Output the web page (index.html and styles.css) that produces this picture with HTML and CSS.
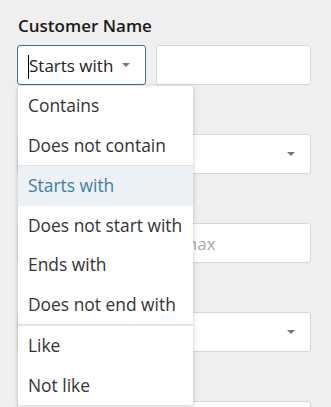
FILE: index.html
```html
<!DOCTYPE html>
<html lang="en">
<head>
    <meta charset="UTF-8">
    <meta name="viewport" content="width=device-width, initial-scale=1.0">
    <title>Filter</title>
    <link rel="stylesheet" href="styles.css">
</head>
<body>

    <div class="filter">
        <div class="field">
            <div class="label">Customer Name</div>
            <div class="row">
                <div class="combo">
                    <div class="select focused">
                        <span class="value"><span class="caret"></span>Starts with</span>
                        <span class="arrow"></span>
                    </div>
                    <ul class="menu">
                        <li>Contains</li>
                        <li class="last">Does not contain</li>
                        <li class="active">Starts with</li>
                        <li>Does not start with</li>
                        <li>Ends with</li>
                        <li class="last">Does not end with</li>
                        <li class="first">Like</li>
                        <li>Not like</li>
                    </ul>
                </div>
                <input class="text" type="text">
            </div>
        </div>

        <!-- labels of these fields sit under the open menu -->
        <div class="field">
            <div class="label"></div>
            <div class="select wide">
                <span class="value"></span>
                <span class="arrow"></span>
            </div>
        </div>

        <div class="field">
            <div class="label"></div>
            <div class="row range">
                <input class="text" type="text">
                <span class="dash"></span>
                <input class="text" type="text" placeholder="max">
            </div>
        </div>

        <div class="field">
            <div class="label"></div>
            <div class="select wide">
                <span class="value"></span>
                <span class="arrow"></span>
            </div>
        </div>

        <div class="field">
            <div class="label"></div>
            <input class="text full" type="text">
        </div>
    </div>

</body>
</html>
```

FILE: styles.css
```css
body {
    margin: 0;
    padding: 0;
    background-color: #efefef;
    font-family: "Open Sans", sans-serif;
    color: #333;
    overflow: hidden;
}
.filter {
    padding: 14px 20px 0 17px;
}
.field {
    margin-bottom: 18px;
}
.label {
    height: 24px;
    font-size: 17px;
    font-weight: 600;
    line-height: 24px;
    color: #1b1b1b;
    margin-bottom: 7px;
    padding-left: 1px;
}
.row {
    display: flex;
    gap: 10px;
}
.combo {
    position: relative;
    width: 129px;
    flex: none;
}
.select {
    height: 40px;
    box-sizing: border-box;
    border: 1px solid #d8d8d8;
    border-radius: 3px;
    background-color: #fff;
    display: flex;
    align-items: center;
    justify-content: space-between;
    padding: 0 15px 0 11px;
}
.select.focused {
    border-color: #3d7196;
}
.value {
    position: relative;
    font-size: 17px;
    color: #222;
}
.caret {
    position: absolute;
    left: -1px;
    top: 1px;
    width: 1px;
    height: 24px;
    background-color: #000;
}
.arrow {
    width: 0;
    height: 0;
    border-left: 4px solid transparent;
    border-right: 4px solid transparent;
    border-top: 4px solid #777;
}
.text {
    flex: 1;
    min-width: 0;
    height: 40px;
    box-sizing: border-box;
    border: 1px solid #d8d8d8;
    border-radius: 3px;
    background-color: #fff;
    padding: 0 10px;
    font-family: "Open Sans", sans-serif;
    font-size: 17px;
    outline: none;
}
.text::placeholder {
    color: #aaa;
}
.full {
    width: 100%;
}
.range {
    gap: 0;
    align-items: center;
}
.dash {
    width: 10px;
}
.range .text:last-child {
    padding-left: 13px;
}
.menu {
    position: absolute;
    top: 41px;
    left: 1px;
    width: 175px;
    margin: 0;
    padding: 0;
    list-style: none;
    background-color: #fff;
    border-radius: 2px;
    box-shadow: 0 1px 5px rgba(0, 0, 0, 0.22);
    z-index: 5;
}
.menu li {
    height: 39.5px;
    line-height: 39.5px;
    padding-left: 10px;
    font-size: 17.4px;
    color: #333;
    white-space: nowrap;
}
.menu li.last {
    border-bottom: 1px solid #e3e3e3;
}
.menu li.first {
    border-top: 1px solid #e3e3e3;
}
.menu li.active {
    background-color: #ebf1f5;
    color: #3a7fa6;
}
```
